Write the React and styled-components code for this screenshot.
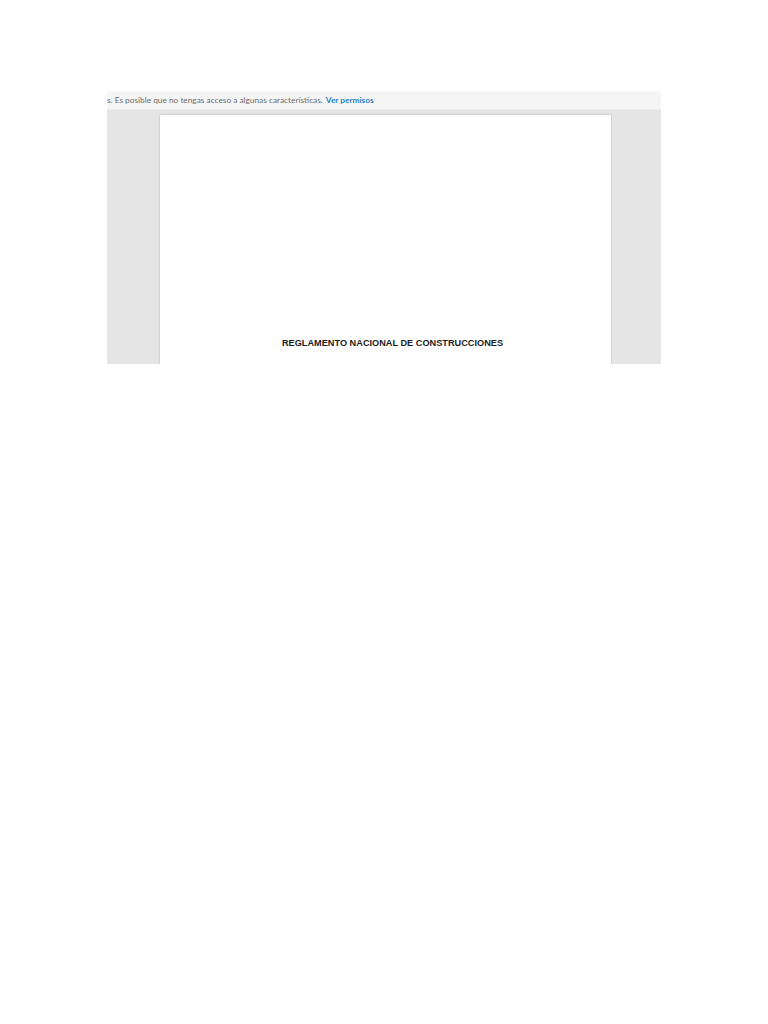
import React from 'react';
import styled, { createGlobalStyle } from 'styled-components';

const GlobalStyle = createGlobalStyle`
    html, body {
        margin: 0;
        padding: 0;
        background: #fff;
    }
`

const Canvas = styled.div`
    width: 768px;
    height: 1024px;
    padding: 91px 0 0 107px;
    box-sizing: border-box;
`

const Shot = styled.div`
    width: 554px;
    height: 273px;
    overflow: hidden;
    display: flex;
    flex-direction: column;
    font-family: Lato, "Open Sans", "Liberation Sans", sans-serif;
`

const Notice = styled.div`
    height: 19px;
    flex-shrink: 0;
    background: #f5f5f5;
    border-bottom: 1px solid #ececec;
    box-sizing: border-box;
    display: flex;
    align-items: center;
    font-size: 8.3px;
    color: #6e6e6e;
    white-space: nowrap;
    a{
        color: #2a7fc4;
        font-weight: 700;
        text-decoration: none;
        margin-left: 3px;
    }
`

const Viewer = styled.div`
    flex: 1;
    background: #e5e5e5;
    display: flex;
    padding: 5px 50px 0 53px;
    min-height: 0;
`

const Sheet = styled.div`
    flex: 1;
    background: #fff;
    box-shadow: 0 0 2px rgba(0,0,0,0.22);
    display: flex;
    flex-direction: column;
    align-items: center;
    padding-top: 223px;
    box-sizing: border-box;
`

const Title = styled.h1`
    margin: 0;
    font-family: "Liberation Sans", Arial, sans-serif;
    font-size: 9.2px;
    font-weight: 700;
    color: #1c1c1c;
    padding-left: 14px;
`

const App = () => {
    return (
        <Canvas>
            <GlobalStyle />
            <Shot>
                <Notice>
                    s. Es posible que no tengas acceso a algunas características.
                    <a href="#">Ver permisos</a>
                </Notice>
                <Viewer>
                    <Sheet>
                        <Title>REGLAMENTO NACIONAL DE CONSTRUCCIONES</Title>
                    </Sheet>
                </Viewer>
            </Shot>
        </Canvas>
    )
}

export default App
